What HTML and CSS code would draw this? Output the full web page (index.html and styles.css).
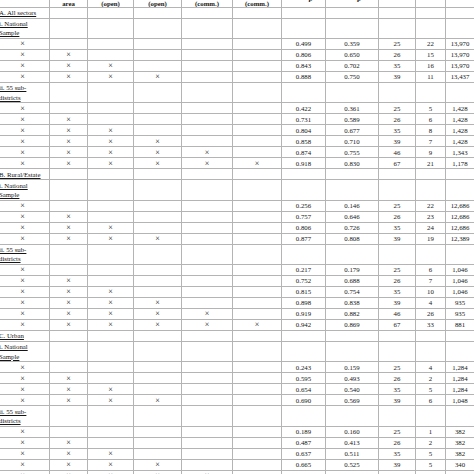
FILE: index.html
```html
<!DOCTYPE html>
<html>
<head>
<meta charset="utf-8">
<link rel="stylesheet" href="styles.css">
</head>
<body>
<div class="tbl">
  <div class="row head">
    <div class="c"></div><div class="c">area</div><div class="c">(open)</div><div class="c">(open)</div><div class="c">(comm.)</div><div class="c">(comm.)</div><div class="c"><span class="hp">p</span></div><div class="c"><span class="hp">p</span></div><div class="c"></div><div class="c"></div><div class="c"></div>
  </div>

  <div class="row sec"><div class="c lbl"><u>A. All sectors</u></div><div class="c"></div><div class="c"></div><div class="c"></div><div class="c"></div><div class="c"></div><div class="c"></div><div class="c"></div><div class="c"></div><div class="c"></div><div class="c"></div></div>
  <div class="row dbl"><div class="c lbl"><u>i. National Sample</u></div><div class="c"></div><div class="c"></div><div class="c"></div><div class="c"></div><div class="c"></div><div class="c"></div><div class="c"></div><div class="c"></div><div class="c"></div><div class="c"></div></div>
  <div class="row"><div class="c">×</div><div class="c"></div><div class="c"></div><div class="c"></div><div class="c"></div><div class="c"></div><div class="c">0.499</div><div class="c">0.359</div><div class="c">25</div><div class="c">22</div><div class="c">13,970</div></div>
  <div class="row"><div class="c">×</div><div class="c">×</div><div class="c"></div><div class="c"></div><div class="c"></div><div class="c"></div><div class="c">0.806</div><div class="c">0.650</div><div class="c">26</div><div class="c">15</div><div class="c">13,970</div></div>
  <div class="row"><div class="c">×</div><div class="c">×</div><div class="c">×</div><div class="c"></div><div class="c"></div><div class="c"></div><div class="c">0.843</div><div class="c">0.702</div><div class="c">35</div><div class="c">16</div><div class="c">13,970</div></div>
  <div class="row"><div class="c">×</div><div class="c">×</div><div class="c">×</div><div class="c">×</div><div class="c"></div><div class="c"></div><div class="c">0.888</div><div class="c">0.750</div><div class="c">39</div><div class="c">11</div><div class="c">13,437</div></div>
  <div class="row dbl"><div class="c lbl"><u>ii. 55 sub-districts</u></div><div class="c"></div><div class="c"></div><div class="c"></div><div class="c"></div><div class="c"></div><div class="c"></div><div class="c"></div><div class="c"></div><div class="c"></div><div class="c"></div></div>
  <div class="row"><div class="c">×</div><div class="c"></div><div class="c"></div><div class="c"></div><div class="c"></div><div class="c"></div><div class="c">0.422</div><div class="c">0.361</div><div class="c">25</div><div class="c">5</div><div class="c">1,428</div></div>
  <div class="row"><div class="c">×</div><div class="c">×</div><div class="c"></div><div class="c"></div><div class="c"></div><div class="c"></div><div class="c">0.731</div><div class="c">0.589</div><div class="c">26</div><div class="c">6</div><div class="c">1,428</div></div>
  <div class="row"><div class="c">×</div><div class="c">×</div><div class="c">×</div><div class="c"></div><div class="c"></div><div class="c"></div><div class="c">0.804</div><div class="c">0.677</div><div class="c">35</div><div class="c">8</div><div class="c">1,428</div></div>
  <div class="row"><div class="c">×</div><div class="c">×</div><div class="c">×</div><div class="c">×</div><div class="c"></div><div class="c"></div><div class="c">0.858</div><div class="c">0.710</div><div class="c">39</div><div class="c">7</div><div class="c">1,428</div></div>
  <div class="row"><div class="c">×</div><div class="c">×</div><div class="c">×</div><div class="c">×</div><div class="c">×</div><div class="c"></div><div class="c">0.874</div><div class="c">0.755</div><div class="c">46</div><div class="c">9</div><div class="c">1,343</div></div>
  <div class="row"><div class="c">×</div><div class="c">×</div><div class="c">×</div><div class="c">×</div><div class="c">×</div><div class="c">×</div><div class="c">0.918</div><div class="c">0.830</div><div class="c">67</div><div class="c">21</div><div class="c">1,178</div></div>

  <div class="row sec"><div class="c lbl"><u>B. Rural/Estate</u></div><div class="c"></div><div class="c"></div><div class="c"></div><div class="c"></div><div class="c"></div><div class="c"></div><div class="c"></div><div class="c"></div><div class="c"></div><div class="c"></div></div>
  <div class="row dbl"><div class="c lbl"><u>i. National Sample</u></div><div class="c"></div><div class="c"></div><div class="c"></div><div class="c"></div><div class="c"></div><div class="c"></div><div class="c"></div><div class="c"></div><div class="c"></div><div class="c"></div></div>
  <div class="row"><div class="c">×</div><div class="c"></div><div class="c"></div><div class="c"></div><div class="c"></div><div class="c"></div><div class="c">0.256</div><div class="c">0.146</div><div class="c">25</div><div class="c">22</div><div class="c">12,686</div></div>
  <div class="row"><div class="c">×</div><div class="c">×</div><div class="c"></div><div class="c"></div><div class="c"></div><div class="c"></div><div class="c">0.757</div><div class="c">0.646</div><div class="c">26</div><div class="c">23</div><div class="c">12,686</div></div>
  <div class="row"><div class="c">×</div><div class="c">×</div><div class="c">×</div><div class="c"></div><div class="c"></div><div class="c"></div><div class="c">0.806</div><div class="c">0.726</div><div class="c">35</div><div class="c">24</div><div class="c">12,686</div></div>
  <div class="row"><div class="c">×</div><div class="c">×</div><div class="c">×</div><div class="c">×</div><div class="c"></div><div class="c"></div><div class="c">0.877</div><div class="c">0.808</div><div class="c">39</div><div class="c">19</div><div class="c">12,389</div></div>
  <div class="row dbl"><div class="c lbl"><u>ii. 55 sub-districts</u></div><div class="c"></div><div class="c"></div><div class="c"></div><div class="c"></div><div class="c"></div><div class="c"></div><div class="c"></div><div class="c"></div><div class="c"></div><div class="c"></div></div>
  <div class="row"><div class="c">×</div><div class="c"></div><div class="c"></div><div class="c"></div><div class="c"></div><div class="c"></div><div class="c">0.217</div><div class="c">0.179</div><div class="c">25</div><div class="c">6</div><div class="c">1,046</div></div>
  <div class="row"><div class="c">×</div><div class="c">×</div><div class="c"></div><div class="c"></div><div class="c"></div><div class="c"></div><div class="c">0.752</div><div class="c">0.688</div><div class="c">26</div><div class="c">7</div><div class="c">1,046</div></div>
  <div class="row"><div class="c">×</div><div class="c">×</div><div class="c">×</div><div class="c"></div><div class="c"></div><div class="c"></div><div class="c">0.815</div><div class="c">0.754</div><div class="c">35</div><div class="c">10</div><div class="c">1,046</div></div>
  <div class="row"><div class="c">×</div><div class="c">×</div><div class="c">×</div><div class="c">×</div><div class="c"></div><div class="c"></div><div class="c">0.898</div><div class="c">0.838</div><div class="c">39</div><div class="c">4</div><div class="c">935</div></div>
  <div class="row"><div class="c">×</div><div class="c">×</div><div class="c">×</div><div class="c">×</div><div class="c">×</div><div class="c"></div><div class="c">0.919</div><div class="c">0.882</div><div class="c">46</div><div class="c">26</div><div class="c">935</div></div>
  <div class="row"><div class="c">×</div><div class="c">×</div><div class="c">×</div><div class="c">×</div><div class="c">×</div><div class="c">×</div><div class="c">0.942</div><div class="c">0.869</div><div class="c">67</div><div class="c">33</div><div class="c">881</div></div>

  <div class="row sec"><div class="c lbl"><u>C. Urban</u></div><div class="c"></div><div class="c"></div><div class="c"></div><div class="c"></div><div class="c"></div><div class="c"></div><div class="c"></div><div class="c"></div><div class="c"></div><div class="c"></div></div>
  <div class="row dbl"><div class="c lbl"><u>i. National Sample</u></div><div class="c"></div><div class="c"></div><div class="c"></div><div class="c"></div><div class="c"></div><div class="c"></div><div class="c"></div><div class="c"></div><div class="c"></div><div class="c"></div></div>
  <div class="row"><div class="c">×</div><div class="c"></div><div class="c"></div><div class="c"></div><div class="c"></div><div class="c"></div><div class="c">0.243</div><div class="c">0.159</div><div class="c">25</div><div class="c">4</div><div class="c">1,284</div></div>
  <div class="row"><div class="c">×</div><div class="c">×</div><div class="c"></div><div class="c"></div><div class="c"></div><div class="c"></div><div class="c">0.595</div><div class="c">0.493</div><div class="c">26</div><div class="c">2</div><div class="c">1,284</div></div>
  <div class="row"><div class="c">×</div><div class="c">×</div><div class="c">×</div><div class="c"></div><div class="c"></div><div class="c"></div><div class="c">0.654</div><div class="c">0.540</div><div class="c">35</div><div class="c">5</div><div class="c">1,284</div></div>
  <div class="row"><div class="c">×</div><div class="c">×</div><div class="c">×</div><div class="c">×</div><div class="c"></div><div class="c"></div><div class="c">0.690</div><div class="c">0.569</div><div class="c">39</div><div class="c">6</div><div class="c">1,048</div></div>
  <div class="row dbl"><div class="c lbl"><u>ii. 55 sub-districts</u></div><div class="c"></div><div class="c"></div><div class="c"></div><div class="c"></div><div class="c"></div><div class="c"></div><div class="c"></div><div class="c"></div><div class="c"></div><div class="c"></div></div>
  <div class="row"><div class="c">×</div><div class="c"></div><div class="c"></div><div class="c"></div><div class="c"></div><div class="c"></div><div class="c">0.189</div><div class="c">0.160</div><div class="c">25</div><div class="c">1</div><div class="c">382</div></div>
  <div class="row"><div class="c">×</div><div class="c">×</div><div class="c"></div><div class="c"></div><div class="c"></div><div class="c"></div><div class="c">0.487</div><div class="c">0.413</div><div class="c">26</div><div class="c">2</div><div class="c">382</div></div>
  <div class="row"><div class="c">×</div><div class="c">×</div><div class="c">×</div><div class="c"></div><div class="c"></div><div class="c"></div><div class="c">0.637</div><div class="c">0.511</div><div class="c">35</div><div class="c">5</div><div class="c">382</div></div>
  <div class="row"><div class="c">×</div><div class="c">×</div><div class="c">×</div><div class="c">×</div><div class="c"></div><div class="c"></div><div class="c">0.665</div><div class="c">0.525</div><div class="c">39</div><div class="c">5</div><div class="c">340</div></div>
  <div class="row"><div class="c">×</div><div class="c">×</div><div class="c">×</div><div class="c">×</div><div class="c">×</div><div class="c"></div><div class="c">0.671</div><div class="c">0.530</div><div class="c">46</div><div class="c">6</div><div class="c">340</div></div>
</div>
</body>
</html>
```
FILE: styles.css
```css
html, body {
  margin: 0;
  padding: 0;
  background: #ffffff;
  overflow: hidden;
}
body {
  width: 474px;
  height: 474px;
  font-family: "Liberation Serif", "Times New Roman", serif;
  font-size: 6.8px;
  color: #151515;
}
.tbl {
  margin-left: -4px;
  margin-top: -12.2px;
  width: 479px;
}
.row {
  display: grid;
  grid-template-columns: 54px 38px 46px 48px 51px 49px 44px 53px 37px 30px 29px;
  height: 11px;
  box-sizing: border-box;
  border-bottom: 1px solid #b4b4b4;
}
.row.head {
  height: 20px;
  font-weight: bold;
}
.row.dbl {
  height: 20.3px;
}
.c {
  box-sizing: border-box;
  border-right: 1px solid #b4b4b4;
  display: flex;
  align-items: center;
  justify-content: center;
  line-height: 9.3px;
  white-space: nowrap;
  overflow: hidden;
}
.row:not(.head) .c:nth-child(-n+6) {
  font-size: 8px;
}
.head .c {
  align-items: flex-end;
  line-height: 7px;
  padding-bottom: 0;
}
.hp {
  position: relative;
  top: -5px;
  left: 7px;
}
.row:not(.head) .c.lbl {
  justify-content: flex-start;
  padding: 0 6px 0 3px;
  white-space: normal;
  font-size: 6.8px;
}
.lbl u {
  text-decoration-thickness: 0.6px;
  text-underline-offset: 1px;
}
```
